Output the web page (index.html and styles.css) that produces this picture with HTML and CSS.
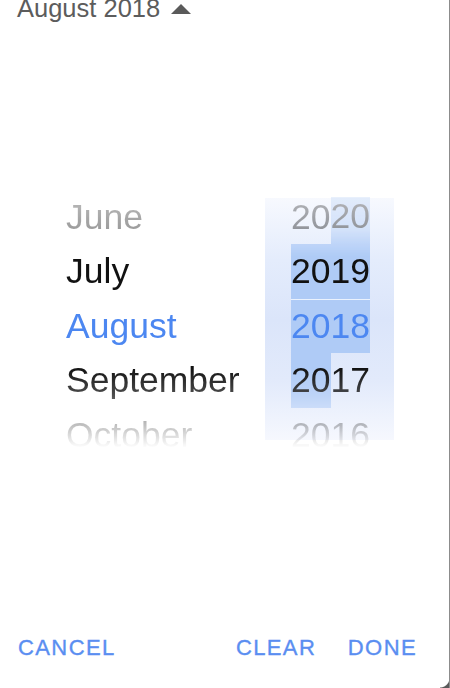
FILE: index.html
```html
<!DOCTYPE html>
<html lang="en">
<head>
<meta charset="utf-8">
<title>Month picker</title>
<link rel="stylesheet" href="styles.css">
</head>
<body>
<div class="screen">
  <header class="title">
    <span class="title-text">August 2018</span>
    <svg class="caret" width="20" height="10" viewBox="0 0 20 10" aria-hidden="true"><polygon points="10,0 20,10 0,10" fill="#5a5a5a"/></svg>
  </header>

  <div class="picker">
    <div class="col months">
      <ul class="rows">
        <li>June</li>
        <li>July</li>
        <li class="current">August</li>
        <li>September</li>
        <li>October</li>
      </ul>
    </div>
    <div class="col years">
      <ul class="rows">
        <li>20<span class="sel sel-first">20</span></li>
        <li><span class="sel">2019</span></li>
        <li class="current"><span class="sel sel-split">2018</span></li>
        <li><span class="sel">20</span>17</li>
        <li>2016</li>
      </ul>
    </div>
  </div>

  <div class="actions">
    <span class="btn">CANCEL</span>
    <span class="spacer"></span>
    <span class="btn">CLEAR</span>
    <span class="btn btn-done">DONE</span>
  </div>

  <span class="edge edge-navy"></span>
  <span class="edge edge-dark"></span>
  <span class="corner"></span>
</div>
</body>
</html>
```

FILE: styles.css
```css
html, body {
  margin: 0;
  padding: 0;
  background: #ffffff;
}

body {
  font-family: "Liberation Sans", Arial, sans-serif;
  overflow: hidden;
}

.screen {
  position: relative;
  width: 450px;
  height: 688px;
  box-sizing: border-box;
  border-right: 1px solid #8c8c8c;
  display: flex;
  flex-direction: column;
  overflow: hidden;
}

/* header */
.title {
  display: flex;
  align-items: flex-start;
  height: 16px;
  padding-left: 17px;
  font-size: 25.5px;
  line-height: 16px;
  color: #5c5c5c;
}

.caret {
  display: block;
  margin-left: 11px;
  margin-top: 4px;
}

/* picker */
.picker {
  display: flex;
  margin-top: 173.5px;
  height: 272.5px;
}

.col {
  font-size: 35.5px;
}

.months {
  margin-left: 66px;
  width: 199px;
}

.years {
  width: 129px;
  padding-left: 26px;
  box-sizing: border-box;
  background: linear-gradient(to bottom,
    rgba(255,255,255,0) 0,
    rgba(255,255,255,0) 7.5px,
    #f7f9fe 7.5px,
    #e4ecfc 70px,
    #dbe5fa 130px,
    #e2eafb 190px,
    #f6f8fe 250.5px,
    rgba(255,255,255,0) 250.5px);
}

.rows {
  list-style: none;
  margin: 0;
  padding: 0;
  -webkit-mask-image: linear-gradient(to bottom,
    rgba(0,0,0,0.25) 0,
    rgba(0,0,0,0.42) 40px,
    rgba(0,0,0,1) 66px,
    rgba(0,0,0,1) 178px,
    rgba(0,0,0,0.75) 205px,
    rgba(0,0,0,0.3) 232px,
    rgba(0,0,0,0) 258px);
  mask-image: linear-gradient(to bottom,
    rgba(0,0,0,0.25) 0,
    rgba(0,0,0,0.42) 40px,
    rgba(0,0,0,1) 66px,
    rgba(0,0,0,1) 178px,
    rgba(0,0,0,0.75) 205px,
    rgba(0,0,0,0.3) 232px,
    rgba(0,0,0,0) 258px);
}

.rows li {
  height: 54.5px;
  line-height: 54.5px;
  white-space: nowrap;
  color: #111111;
}

.rows li.current {
  color: #4c87f1;
}

.sel {
  display: inline-block;
  height: 54.5px;
  vertical-align: top;
  background: #afcbf6;
}

.sel-first {
  height: 47px;
  margin-top: 7.5px;
  line-height: 39.5px;
}

.sel-split {
  box-shadow: inset 0 1px 0 rgba(255,255,255,0.75);
}

/* actions */
.actions {
  display: flex;
  margin-top: auto;
  padding: 0 32px 28.5px 18px;
  font-size: 22px;
  line-height: 24px;
  letter-spacing: 1.4px;
  color: #5a8ef1;
  -webkit-text-stroke: 0.35px #5a8ef1;
}

.spacer {
  flex: 1;
}

.btn-done {
  margin-left: 31.6px;
}

/* window edge details */
.edge {
  position: absolute;
  right: -1px;
  width: 1px;
}

.edge-navy {
  top: 25px;
  height: 100px;
  background: #1b2150;
}

.edge-dark {
  top: 143px;
  height: 46px;
  background: #232323;
}

.corner {
  position: absolute;
  right: -1px;
  bottom: 0;
  width: 10px;
  height: 10px;
  background: radial-gradient(circle at 0 0, rgba(0,0,0,0) 9px, #5a5a5a 10px);
}
```
